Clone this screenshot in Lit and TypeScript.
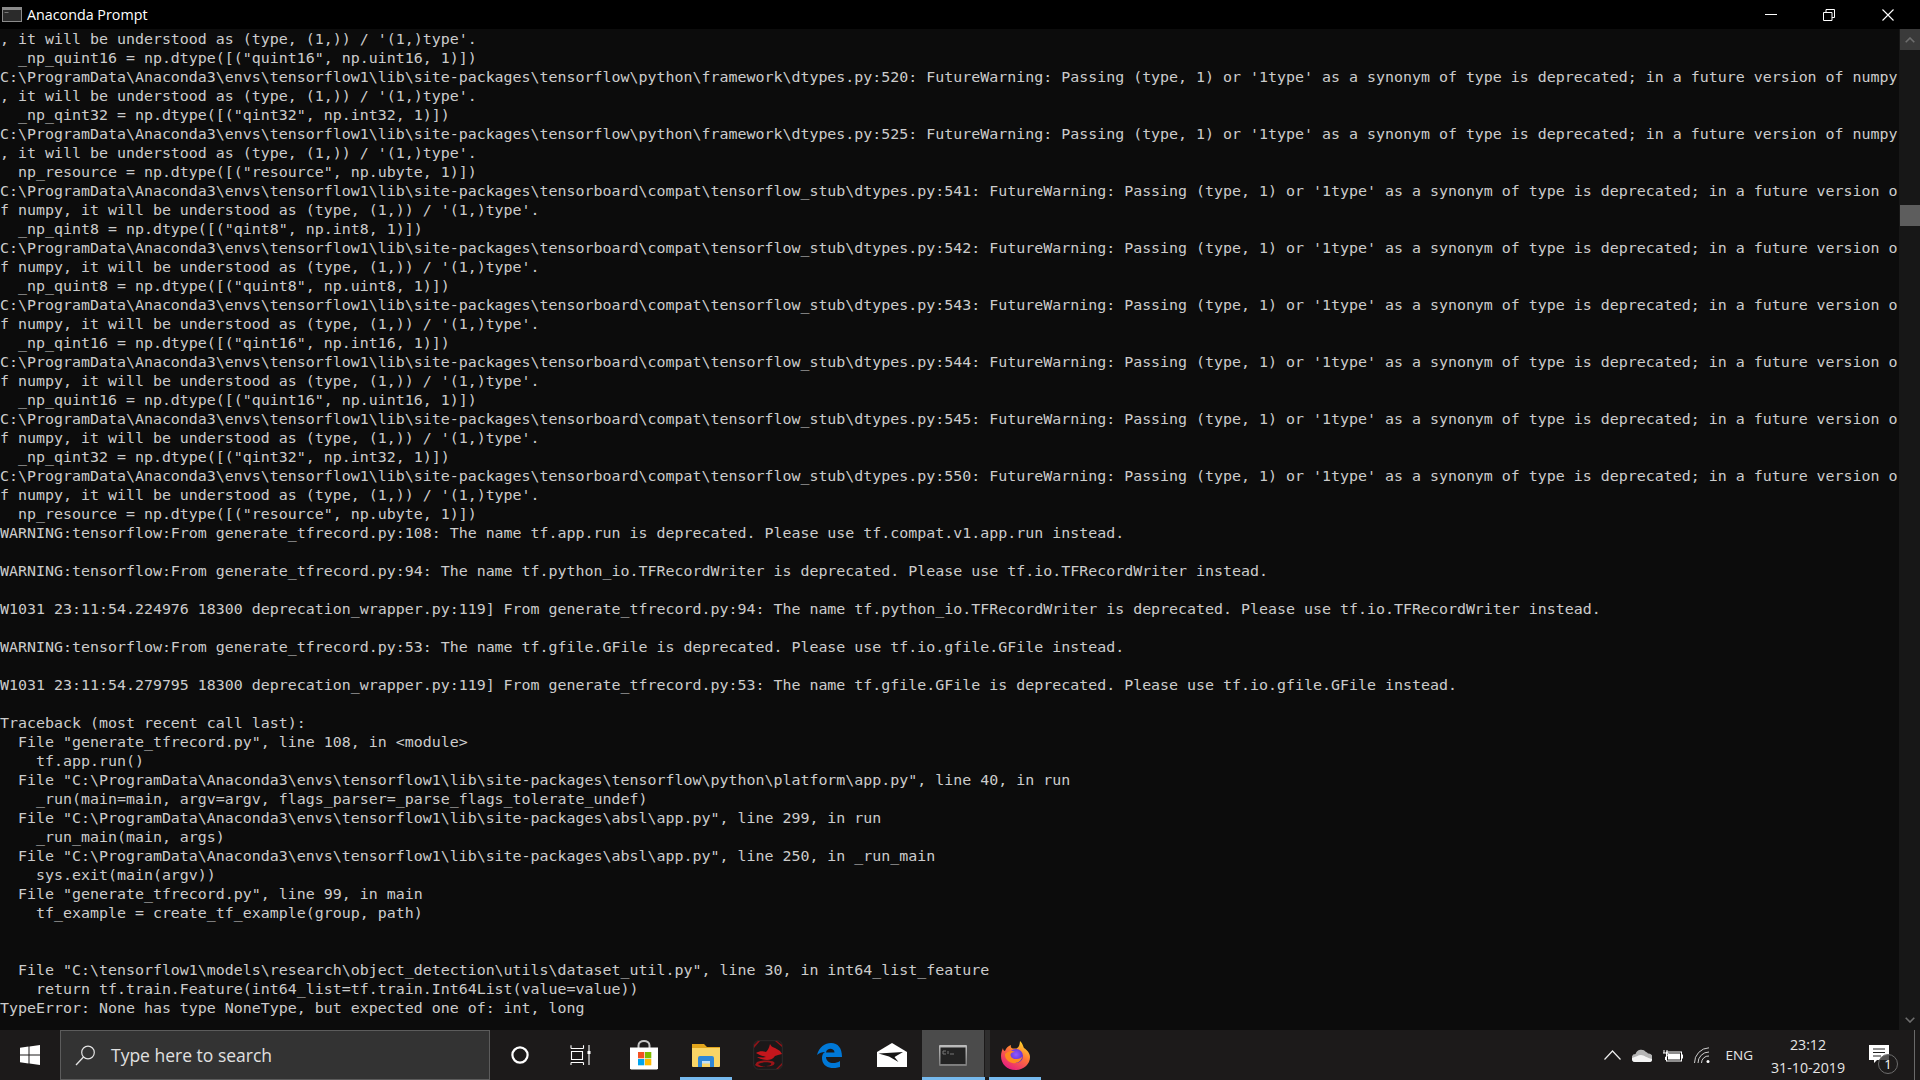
import { LitElement, html, css, svg } from "lit";
import { customElement } from "lit/decorators.js";

const SP = "C:\\ProgramData\\Anaconda3\\envs\\tensorflow1\\lib\\site-packages\\";
const W = "FutureWarning: Passing (type, 1) or '1type' as a synonym of type is deprecated; in a future version o";
const IT = ", it will be understood as (type, (1,)) / '(1,)type'.";
const F = "f numpy, it will be understood as (type, (1,)) / '(1,)type'.";
const tfl = (n: number) => `${SP}tensorflow\\python\\framework\\dtypes.py:${n}: ${W.slice(0, -2)} of numpy`;
const tb = (n: number) => `${SP}tensorboard\\compat\\tensorflow_stub\\dtypes.py:${n}: ${W}`;
const ANA = "C:\\ProgramData\\Anaconda3\\envs\\tensorflow1\\lib\\site-packages";

const LINES: string[] = [
  IT,
  `  _np_quint16 = np.dtype([("quint16", np.uint16, 1)])`,
  tfl(520),
  IT,
  `  _np_qint32 = np.dtype([("qint32", np.int32, 1)])`,
  tfl(525),
  IT,
  `  np_resource = np.dtype([("resource", np.ubyte, 1)])`,
  tb(541),
  F,
  `  _np_qint8 = np.dtype([("qint8", np.int8, 1)])`,
  tb(542),
  F,
  `  _np_quint8 = np.dtype([("quint8", np.uint8, 1)])`,
  tb(543),
  F,
  `  _np_qint16 = np.dtype([("qint16", np.int16, 1)])`,
  tb(544),
  F,
  `  _np_quint16 = np.dtype([("quint16", np.uint16, 1)])`,
  tb(545),
  F,
  `  _np_qint32 = np.dtype([("qint32", np.int32, 1)])`,
  tb(550),
  F,
  `  np_resource = np.dtype([("resource", np.ubyte, 1)])`,
  "WARNING:tensorflow:From generate_tfrecord.py:108: The name tf.app.run is deprecated. Please use tf.compat.v1.app.run instead.",
  "",
  "WARNING:tensorflow:From generate_tfrecord.py:94: The name tf.python_io.TFRecordWriter is deprecated. Please use tf.io.TFRecordWriter instead.",
  "",
  "W1031 23:11:54.224976 18300 deprecation_wrapper.py:119] From generate_tfrecord.py:94: The name tf.python_io.TFRecordWriter is deprecated. Please use tf.io.TFRecordWriter instead.",
  "",
  "WARNING:tensorflow:From generate_tfrecord.py:53: The name tf.gfile.GFile is deprecated. Please use tf.io.gfile.GFile instead.",
  "",
  "W1031 23:11:54.279795 18300 deprecation_wrapper.py:119] From generate_tfrecord.py:53: The name tf.gfile.GFile is deprecated. Please use tf.io.gfile.GFile instead.",
  "",
  "Traceback (most recent call last):",
  `  File "generate_tfrecord.py", line 108, in <module>`,
  "    tf.app.run()",
  `  File "${ANA}\\tensorflow\\python\\platform\\app.py", line 40, in run`,
  "    _run(main=main, argv=argv, flags_parser=_parse_flags_tolerate_undef)",
  `  File "${ANA}\\absl\\app.py", line 299, in run`,
  "    _run_main(main, args)",
  `  File "${ANA}\\absl\\app.py", line 250, in _run_main`,
  "    sys.exit(main(argv))",
  `  File "generate_tfrecord.py", line 99, in main`,
  "    tf_example = create_tf_example(group, path)",
  "",
  "",
  `  File "C:\\tensorflow1\\models\\research\\object_detection\\utils\\dataset_util.py", line 30, in int64_list_feature`,
  "    return tf.train.Feature(int64_list=tf.train.Int64List(value=value))",
  "TypeError: None has type NoneType, but expected one of: int, long",
];

const icon = (w: number, h: number, body: unknown) =>
  html`<svg width=${w} height=${h} viewBox="0 0 ${w} ${h}">${body}</svg>`;

const ICONS = {
  prompt: icon(20, 15, svg`<rect width="20" height="15" fill="#8a8a8a"/><rect x="1" y="3" width="18" height="11" fill="#2b2b2b"/><rect x="2.500" y="5" width="4" height="1" fill="#777"/>`),
  min: icon(12, 1, svg`<rect width="12" height="1" fill="#fff"/>`),
  restore: icon(12, 12, svg`<path d="M.5 3.500h8.500v8H.5z M3 3.500V.5h8.500v8H9" fill="none" stroke="#fff"/>`),
  close: icon(12, 12, svg`<path d="M.5.5l11 11M11.500.5l-11 11" fill="none" stroke="#fff" stroke-width="1.100"/>`),
  up: icon(10, 6, svg`<path d="M.7 5.300L5 1l4.300 4.300" fill="none" stroke="#6e6e6e" stroke-width="1.600"/>`),
  down: icon(10, 6, svg`<path d="M.7.7L5 5l4.300-4.300" fill="none" stroke="#6e6e6e" stroke-width="1.600"/>`),
  start: icon(20, 20, svg`<path d="M0 2.800l8.500-1.200v7.900H0zM9.500 1.400L20 0v9.500H9.500zM0 10.500h8.500v7.900L0 17.200zM9.500 10.500H20V20L9.500 18.600z" fill="#fff"/>`),
  search: icon(21, 21, svg`<circle cx="13" cy="7.500" r="6.300" fill="none" stroke="#e4e4e4" stroke-width="1.200"/><path d="M8.500 12L1 20" stroke="#e4e4e4" stroke-width="1.300"/>`),
  cortana: icon(20, 20, svg`<circle cx="10" cy="10" r="7.600" fill="none" stroke="#fff" stroke-width="2.200"/>`),
  taskview: icon(21, 20, svg`<path d="M1 3.500h12.500M1 .2v3.300M13.500.2v3.300M1.500 6.500h11v8h-11zM1 17.500h12.500M1 17.500v2.500M13.500 17.500v2.500M19 0v6M19 9v11" fill="none" stroke="#fff" stroke-width="1.100"/><rect x="17.500" y="6" width="3" height="3" fill="#fff"/>`),
  store: icon(30, 30, svg`<path d="M9.500 9V5.500c0-6 11-6 11 0V9" fill="none" stroke="#c4c4c4" stroke-width="2"/><path d="M1 7.500h28v21l-1 1H2l-1-1z" fill="#fff"/><rect x="9" y="12" width="6.300" height="6.300" fill="#f25022"/><rect x="16" y="12" width="6.300" height="6.300" fill="#7fba00"/><rect x="9" y="19" width="6.300" height="6.300" fill="#00a4ef"/><rect x="16" y="19" width="6.300" height="6.300" fill="#ffb900"/>`),
  files: icon(28, 24, svg`<path d="M0 1h12l3 3h13v3H0z" fill="#e2a51c"/><path d="M0 5h28v18a1 1 0 0 1-1 1H1a1 1 0 0 1-1-1z" fill="#f9d566"/><path d="M6 15a2 2 0 0 1 2-2h12a2 2 0 0 1 2 2v9h-4v-6h-8v6H6z" fill="#2f87d6"/><rect x="10" y="18" width="8" height="2.500" fill="#bfe0f7"/>`),
  msi: icon(30, 30, svg`<rect x=".7" y=".7" width="28.600" height="28.600" rx="5" fill="#1b1819" stroke="#2e2b2b"/><path d="M1 5l4-4h2L1 8zM29 25l-4 4h-2l6-6zM24 1l5 4v2l-7-6z" fill="#8c1418"/><path d="M3 13c3-2 7-2 10-1 2-2 3-4 4-8 1 2 2 3 5 4l5 3 2 3-4 1-3 1c-2 3-5 4-8 4-3 0-7-1-10-3 3 0 6 1 9 0-4-1-7-2-10-4z" fill="#c4161c"/><path d="M4 22c5-2 14-2 17 0 2 2-2 5-8 4 3 0 6-1 5-3-3-1-9-1-13 1 2 2 5 3 8 2-4 2-9 1-11-1z" fill="#9c1418"/>`),
  edge: icon(25, 25, svg`<path d="M0 12C2 4 8 0 14 0c7 0 11 5 11 14H9c0 6 8 8 14 4v6c-9 3-18 0-18-9 0-3 1-5 3-6-3 0-6 1-8 3zM9 9.500h8.500c0-5-8-5-8.500 0z" fill="#0078d7"/>`),
  mail: icon(30, 24, svg`<path d="M0 9L15 0l15 9v15H0z" fill="#fff"/><path d="M1.500 10.500L26 9l-8.500 5 4 5L12 13.500z" fill="#161616"/>`),
  terminal: icon(28, 21, svg`<defs><linearGradient id="tf" x1="0" y1="0" x2="0" y2="1"><stop offset="0" stop-color="#bdbdbd"/><stop offset="1" stop-color="#7b7b7b"/></linearGradient></defs><rect width="28" height="21" rx="1" fill="url(#tf)"/><rect x="1.500" y="2.500" width="25" height="16.500" fill="#232323"/><path d="M4 6h3M4 6v3h3M9 6v3M11 9h4" fill="none" stroke="#777"/>`),
  firefox: icon(29, 29, svg`
    <defs>
      <linearGradient id="ff" x1="0.8" y1="0" x2="0.2" y2="1"><stop offset="0" stop-color="#ffe226"/><stop offset=".45" stop-color="#ff7139"/><stop offset="1" stop-color="#e31587"/></linearGradient>
      <radialGradient id="fg" cx=".5" cy=".4" r=".6"><stop offset="0" stop-color="#9059ff"/><stop offset="1" stop-color="#592acb"/></radialGradient>
    </defs>
    <path d="M14.500 29C6 29 0 23 0 15c0-3 1-6 2-8 0 2 1 3 2 3 1-3 3-5 6-6-.5 2 0 3 2 3.500C17 8 18.500 6 19 0c3 3 3 5 4 7 3 2 6 5 6 9 0 7-6 13-14.500 13z" fill="url(#ff)"/>
    <circle cx="15" cy="15" r="7" fill="url(#fg)"/>
    <path d="M4 13c3-3 7-4 10-2-3 0-4 1-4.500 2.500 0 3 3 5 6 4.500 3 0 5-1 6-3-1 5-5 8-10 7-5-1-8-5-7.500-9z" fill="#ff8a1f"/>`),
  chevron: icon(17, 10, svg`<path d="M.5 9.500L8.500 1l8 8.500" fill="none" stroke="#eee" stroke-width="1.200"/>`),
  cloud: icon(20, 13, svg`<path d="M4 13a4 4 0 0 1-.5-8 6 6 0 0 1 10.500-2 4.500 4.500 0 0 1 2 1.500 4 4 0 0 1 1 8.500z" fill="#b5b5b5"/><path d="M0 9c4-1 6-3 9-3s6 3 11 4v1a2 2 0 0 1-2 2H3a3 3 0 0 1-3-3z" fill="#f4f4f4"/>`),
  battery: icon(21, 13, svg`<path d="M2 1v3M5 1v3M1 4h5v2.500L3.500 8 3.500 11" fill="none" stroke="#fff" stroke-width="1"/><rect x="4.500" y="3" width="15" height="9" fill="none" stroke="#fff"/><rect x="6" y="4.500" width="12" height="6" fill="#fff"/><rect x="20" y="5.500" width="1" height="4" fill="#fff"/>`),
  wifi: icon(16, 16, svg`<g fill="none" stroke="#cfcfcf" stroke-width="1"><path d="M.5 16A15 15 0 0 1 15 .8"/><path d="M4 16A11 11 0 0 1 15 5"/><path d="M7.500 16A7 7 0 0 1 15 9"/></g><circle cx="14" cy="14.500" r="1.500" fill="#fff"/>`),
  note: icon(20, 18, svg`<path d="M0 0h20v15H8l-3 3v-3H0z" fill="#fff"/><path d="M4 4h12M4 7.500h12M4 11h8" stroke="#222" stroke-width="1"/>`),
};

@customElement("app-root")
export class AppRoot extends LitElement {
  static styles = css`
    :host { display: flex; flex-direction: column; width: 1920px; height: 1080px; overflow: hidden; background: #0c0c0c; }
    .title { height: 29px; flex: none; background: #000; display: flex; align-items: center; color: #fff; font: 14.300px "Open Sans", sans-serif; }
    .title-icon { display: flex; margin: 0 5px 0 2px; }
    .title-name { flex: 1; }
    .win { width: 58.500px; height: 29px; display: flex; align-items: center; justify-content: center; }
    .win-end { width: 3px; }
    .mid { flex: 1; min-height: 0; display: flex; }
    .console { flex: 1; min-width: 0; overflow: hidden; box-sizing: border-box; padding-top: 1px; color: #ccc; font: 14.950px/19px "DejaVu Sans Mono", monospace; }
    .row { height: 19px; white-space: pre; }
    .bar { width: 21px; flex: none; background: #171717; display: flex; flex-direction: column; align-items: flex-end; }
    .arrow { width: 20px; height: 21px; display: flex; align-items: center; justify-content: center; }
    .arrow.top { background: #3a3a3a; }
    .thumb { width: 20px; height: 21px; margin-top: 155px; background: #5d5d5d; }
    .spacer { flex: 1; }
    .task { height: 50px; flex: none; background: #1c1a1a; display: flex; align-items: stretch; color: #fff; font-family: "Open Sans", sans-serif; }
    .start { width: 60px; display: flex; align-items: center; justify-content: center; }
    .search { width: 430px; box-sizing: border-box; background: #333; border: 1px solid #5c5c5c; display: flex; align-items: center; padding-left: 14px; gap: 15px; color: #e0e0e0; font-size: 17.500px; }
    .search svg { margin-top: 1px; }
    .cell { width: 61.900px; flex: none; display: flex; align-items: center; justify-content: center; position: relative; }
    .cell.first { width: 60px; }
    .cell.tv { margin-right: 3px; }
    .cell.on::after { content: ""; position: absolute; left: 5px; right: 5px; bottom: 0; height: 3px; background: #76b9ed; }
    .cell.active { background: #4b4b4b; }
    .cell.active::after { left: 0; right: -1px; }
    .cell.active::before { content: ""; position: absolute; right: -6px; top: 0; bottom: 3px; width: 5px; background: #2e2d2d; }
    .fill { flex: 1; }
    .tray { display: flex; align-items: center; color: #e6e6e6; }
    .tray > * { flex: none; display: flex; }
    .chev { margin-right: 11px; }
    .cloud { margin-right: 10px; }
    .batt { margin-right: 11px; }
    .clock { width: 80px; flex-direction: column; align-items: center; font-size: 14.200px; line-height: 23px; padding-top: 1px; }
    .eng { font-size: 13.500px; margin: 0 15px 0 16px; }
    .notify { position: relative; margin-left: 21px; margin-right: 25px; padding-bottom: 3px; }
    .badge { position: absolute; left: 9px; top: 9px; width: 20px; height: 20px; box-sizing: border-box; border: 1.500px solid #6d6d6d; border-radius: 50%; background: rgba(30,28,28,.75); display: flex; align-items: center; justify-content: center; font-size: 13px; color: #fff; }
    .edge { width: 1px; background: #6a6a6a; margin-right: 5px; flex: none; }
  `;

  render() {
    return html`
      <div class="title">
        <span class="title-icon">${ICONS.prompt}</span>
        <span class="title-name">Anaconda Prompt</span>
        <span class="win">${ICONS.min}</span>
        <span class="win">${ICONS.restore}</span>
        <span class="win">${ICONS.close}</span>
        <span class="win-end"></span>
      </div>
      <div class="mid">
        <div class="console">${LINES.map((l) => html`<div class="row">${l}</div>`)}</div>
        <div class="bar">
          <div class="arrow top">${ICONS.up}</div>
          <div class="thumb"></div>
          <div class="spacer"></div>
          <div class="arrow">${ICONS.down}</div>
        </div>
      </div>
      <div class="task">
        <div class="start">${ICONS.start}</div>
        <div class="search">${ICONS.search}<span>Type here to search</span></div>
        <div class="cell first">${ICONS.cortana}</div>
        <div class="cell first tv">${ICONS.taskview}</div>
        <div class="cell">${ICONS.store}</div>
        <div class="cell on">${ICONS.files}</div>
        <div class="cell">${ICONS.msi}</div>
        <div class="cell">${ICONS.edge}</div>
        <div class="cell">${ICONS.mail}</div>
        <div class="cell on active">${ICONS.terminal}</div>
        <div class="cell on">${ICONS.firefox}</div>
        <div class="fill"></div>
        <div class="tray">
          <span class="chev">${ICONS.chevron}</span>
          <span class="cloud">${ICONS.cloud}</span>
          <span class="batt">${ICONS.battery}</span>
          <span>${ICONS.wifi}</span>
          <span class="eng">ENG</span>
          <span class="clock"><span>23:12</span><span>31-10-2019</span></span>
          <span class="notify">${ICONS.note}<span class="badge">1</span></span>
        </div>
        <div class="edge"></div>
      </div>
    `;
  }
}
